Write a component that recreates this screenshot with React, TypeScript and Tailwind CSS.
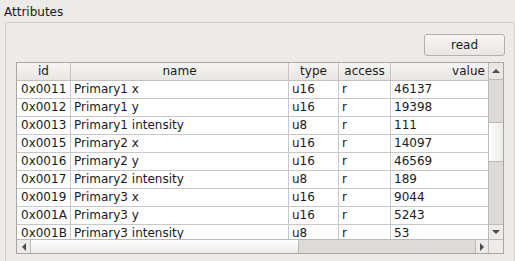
import React from 'react';

const rows = [
  ['0x0011', 'Primary1 x', 'u16', 'r', '46137'],
  ['0x0012', 'Primary1 y', 'u16', 'r', '19398'],
  ['0x0013', 'Primary1 intensity', 'u8', 'r', '111'],
  ['0x0015', 'Primary2 x', 'u16', 'r', '14097'],
  ['0x0016', 'Primary2 y', 'u16', 'r', '46569'],
  ['0x0017', 'Primary2 intensity', 'u8', 'r', '189'],
  ['0x0019', 'Primary3 x', 'u16', 'r', '9044'],
  ['0x001A', 'Primary3 y', 'u16', 'r', '5243'],
  ['0x001B', 'Primary3 intensity', 'u8', 'r', '53'],
];

const cols = [
  { name: 'id', w: 'w-[54px]' },
  { name: 'name', w: 'w-[218px]' },
  { name: 'type', w: 'w-[50px]' },
  { name: 'access', w: 'w-[52px]' },
  { name: 'value', w: 'w-[156px]' },
];

function Arrow({ dir }: { dir: 'up' | 'down' | 'left' | 'right' }) {
  const pts = {
    up: '0,5 4,1 8,5',
    down: '0,1 8,1 4,5',
    left: '5,0 5,8 1,4',
    right: '1,0 1,8 5,4',
  }[dir];
  const vert = dir === 'up' || dir === 'down';
  return (
    <svg width={vert ? 8 : 6} height={vert ? 6 : 8} viewBox={vert ? '0 0 8 6' : '0 0 6 8'}>
      <polygon points={pts} fill="#4a4a4a" />
    </svg>
  );
}

export default function App() {
  return (
    <div
      className="w-[515px] h-[261px] overflow-hidden bg-[#edebe8] text-[12px] text-[#1a1a1a]"
      style={{ fontFamily: '"DejaVu Sans", sans-serif' }}
    >
      <div className="h-[22px] pl-[4px] pt-[5px] leading-[15px]">Attributes</div>
      <div className="ml-[5px] w-[510px] h-[250px] border border-[#d3d0cc] rounded-[2px] flex flex-col">
        <div className="flex justify-end pt-[11px] pr-[9px]">
          <button className="w-[81px] h-[22px] rounded-[3px] border border-[#b3afaa] bg-gradient-to-b from-[#f7f6f5] to-[#e9e7e4] leading-[20px]">
            read
          </button>
        </div>
        <div className="mt-[6px] ml-[10px] w-[488px] h-[192px] border border-[#aaa6a1] bg-white flex flex-col">
          <div className="flex h-[176px]">
            <div className="w-[471px] overflow-hidden">
              <div className="flex h-[18px] border-b border-[#c3c0bc] bg-gradient-to-b from-[#f6f5f4] to-[#e8e6e3]">
                {cols.map((c) => (
                  <div
                    key={c.name}
                    className={`${c.w} shrink-0 border-r border-[#c9c6c2] text-center leading-[17px]`}
                  >
                    {c.name}
                  </div>
                ))}
              </div>
              {rows.map((r) => (
                <div key={r[0]} className="flex h-[18px] border-b border-[#c8c8c8]">
                  {r.map((v, i) => (
                    <div
                      key={i}
                      className={`${cols[i].w} shrink-0 border-r border-[#c8c8c8] leading-[17px] ${i === 0 ? 'pl-[4px]' : 'pl-[3px]'}`}
                    >
                      {v}
                    </div>
                  ))}
                </div>
              ))}
            </div>
            <div className="w-[15px] border-l border-[#bdb9b5] bg-[#dddbd7] flex flex-col">
              <div className="h-[17px] border-b border-[#bdb9b5] bg-[#e9e7e4] flex items-center justify-center">
                <Arrow dir="up" />
              </div>
              <div className="h-[42px]" />
              <div className="h-[40px] border-y border-[#bdb9b5] bg-gradient-to-r from-[#ffffff] to-[#ecebe9]" />
              <div className="flex-1" />
              <div className="h-[15px] border-t border-[#bdb9b5] bg-[#ecebe9] flex items-center justify-center">
                <Arrow dir="down" />
              </div>
            </div>
          </div>
          <div className="flex h-[14px] border-t border-[#bdb9b5]">
            <div className="w-[14px] border-r border-[#bdb9b5] bg-[#ecebe9] flex items-center justify-center">
              <Arrow dir="left" />
            </div>
            <div className="w-[268px] border-r border-[#bdb9b5] bg-gradient-to-b from-[#ffffff] to-[#ecebe9]" />
            <div className="w-[176px] bg-[#dddbd7]" />
            <div className="w-[13px] border-l border-[#bdb9b5] bg-[#ecebe9] flex items-center justify-center">
              <Arrow dir="right" />
            </div>
            <div className="flex-1 border-l border-[#bdb9b5] bg-[#edebe8]" />
          </div>
        </div>
      </div>
    </div>
  );
}
